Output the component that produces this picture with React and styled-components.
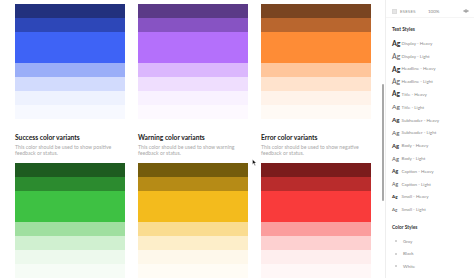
import React from "react";
import styled, { createGlobalStyle } from "styled-components";

const Global = createGlobalStyle`
  html, body { margin: 0; padding: 0; background: #fff; }
  body { font-family: Lato, "Liberation Sans", sans-serif; overflow: hidden; }
  * { box-sizing: border-box; }
`;

const Page = styled.div`
  display: flex;
  width: 474px;
  height: 278px;
  overflow: hidden;
  background: #fff;
`;

const Canvas = styled.div`
  position: relative;
  width: 385px;
  flex: none;
  overflow: hidden;
  padding: 4px 0 0 15px;
`;

const Grid = styled.div`
  display: grid;
  grid-template-columns: repeat(3, 110px);
  column-gap: 13px;
  align-items: start;
`;

const Card = styled.div`
  display: flex;
  flex-direction: column;
`;

const Stack = styled.div`
  display: flex;
  flex-direction: column;
`;

const Swatch = styled.div`
  height: ${(p) => (p.$main ? 31 : 14)}px;
  background: ${(p) => p.$c};
`;

const Caption = styled.div`
  padding: 13px 0 6px;
`;

const Title = styled.div`
  font-size: 6.7px;
  line-height: 10px;
  font-weight: 700;
  color: #222;
  white-space: nowrap;
`;

const Desc = styled.div`
  margin-top: 1.5px;
  font-size: 5.2px;
  line-height: 6.5px;
  color: #a8a8a8;
  width: 110px;
`;

const Thumb = styled.div`
  position: absolute;
  left: 382px;
  top: 84px;
  width: 2px;
  height: 117px;
  border-radius: 1px;
  background: #a8a8a8;
`;

const Cursor = styled.svg`
  position: absolute;
  left: 252px;
  top: 159px;
`;

const Panel = styled.div`
  flex: 1;
  border-left: 1px solid #eeeeee;
  padding: 5px 0 0 6px;
  display: flex;
  flex-direction: column;
`;

const FillRow = styled.div`
  display: flex;
  align-items: center;
  height: 12px;
  padding-right: 5px;
  font-size: 4.5px;
  color: #8a8a8a;
`;

const ColorBox = styled.span`
  width: 5px;
  height: 5px;
  background: #e5e5e5;
  border: 0.5px solid #dcdcdc;
  margin-right: 3px;
`;

const Hex = styled.span`
  width: 28px;
`;

const Pct = styled.span`
  flex: 1;
`;

const Divider = styled.div`
  height: 1px;
  margin: 0 -6px 6px -6px;
  background: #f5f5f5;
`;

const Heading = styled.div`
  height: 10px;
  line-height: 10px;
  font-size: 4.8px;
  font-weight: 700;
  color: #333;
  margin-top: ${(p) => p.$mt || 0}px;
  margin-bottom: 3px;
`;

const StyleRow = styled.div`
  display: flex;
  align-items: center;
  height: 12.8px;
`;

const Ag = styled.span`
  width: 9.5px;
  font-size: ${(p) => p.$size}px;
  font-weight: ${(p) => (p.$heavy ? 700 : 400)};
  color: ${(p) => (p.$heavy ? "#2a2a2a" : "#555")};
  line-height: 1;
`;

const Label = styled.span`
  font-size: 4.5px;
  color: #8a8a8a;
  white-space: nowrap;
`;

const ColorRow = styled.div`
  display: flex;
  align-items: center;
  height: 12.5px;
`;

const Dot = styled.span`
  width: 2px;
  height: 2px;
  border-radius: 50%;
  background: #c4c4c4;
  margin: 0 6px 0 3px;
`;

const palettes = {
  blue: ["#22317e", "#2d47b8", "#3e63f6", "#9aaef8", "#d2dbfd", "#eef2fe", "#f7f9ff"],
  purple: ["#5b3a87", "#8753c3", "#b470fb", "#dbb7fd", "#efdefe", "#f9f2ff", "#fdf9ff"],
  orange: ["#7a4521", "#b9662e", "#fe8c36", "#ffc69b", "#ffe3cd", "#fff3ea", "#fffaf5"],
  green: ["#1e5b20", "#2c8b2f", "#3ec143", "#a0dfa0", "#d0f0d0", "#edf9ed", "#f6fcf6"],
  yellow: ["#745c0c", "#b68b16", "#f3bb1d", "#fadc90", "#fdeec9", "#fef8eb", "#fffcf5"],
  red: ["#7b1c1c", "#b92c2c", "#f93b3b", "#fb9d9d", "#fdd0d0", "#feeeee", "#fff7f7"],
};

const Swatches = ({ colors }) => (
  <Stack>
    {colors.map((c, i) => (
      <Swatch key={i} $c={c} $main={i === 2} />
    ))}
  </Stack>
);

const cards = [
  { colors: palettes.blue },
  { colors: palettes.purple },
  { colors: palettes.orange },
  {
    title: "Success color variants",
    desc: "This color should be used to show positive feedback or status.",
    colors: palettes.green,
  },
  {
    title: "Warning color variants",
    desc: "This color should be used to show warning feedback or status.",
    colors: palettes.yellow,
  },
  {
    title: "Error color variants",
    desc: "This color should be used to show negative feedback or status.",
    colors: palettes.red,
  },
];

const textStyles = [
  ["Display - Heavy", 7, true],
  ["Display - Light", 7, false],
  ["Headline - Heavy", 6.8, true],
  ["Headline - Light", 6.8, false],
  ["Title - Heavy", 6.5, true],
  ["Title - Light", 6.5, false],
  ["Subheader - Heavy", 6.2, true],
  ["Subheader - Light", 6.2, false],
  ["Body - Heavy", 5.8, true],
  ["Body - Light", 5.8, false],
  ["Caption - Heavy", 5.2, true],
  ["Caption - Light", 5.2, false],
  ["Small - Heavy", 4.5, true],
  ["Small - Light", 4.5, false],
];

const Eye = () => (
  <svg width="6" height="4" viewBox="0 0 12 8">
    <path d="M1 4 Q6 -1.5 11 4 Q6 9.5 1 4 Z" fill="none" stroke="#777" strokeWidth="1.2" />
    <circle cx="6" cy="4" r="1.7" fill="#777" />
  </svg>
);

export default function App() {
  return (
    <>
      <Global />
      <Page>
        <Canvas>
          <Grid>
            {cards.map((card, i) => (
              <Card key={i}>
                {card.title && (
                  <Caption>
                    <Title>{card.title}</Title>
                    <Desc>{card.desc}</Desc>
                  </Caption>
                )}
                <Swatches colors={card.colors} />
              </Card>
            ))}
          </Grid>
          <Thumb />
          <Cursor width="5" height="7" viewBox="0 0 10 14">
            <path d="M1 1 L1 11 L3.5 8.5 L5.5 13 L7 12.3 L5 8 L8.5 8 Z" fill="#111" stroke="#fff" strokeWidth="0.8" />
          </Cursor>
        </Canvas>
        <Panel>
          <FillRow>
            <ColorBox />
            <Hex>E5E5E5</Hex>
            <Pct>100%</Pct>
            <Eye />
          </FillRow>
          <Divider />
          <Heading>Text Styles</Heading>
          {textStyles.map(([label, size, heavy]) => (
            <StyleRow key={label}>
              <Ag $size={size} $heavy={heavy}>Ag</Ag>
              <Label>{label}</Label>
            </StyleRow>
          ))}
          <Heading $mt={6}>Color Styles</Heading>
          {["Gray", "Black", "White"].map((c) => (
            <ColorRow key={c}>
              <Dot />
              <Label>{c}</Label>
            </ColorRow>
          ))}
        </Panel>
      </Page>
    </>
  );
}
